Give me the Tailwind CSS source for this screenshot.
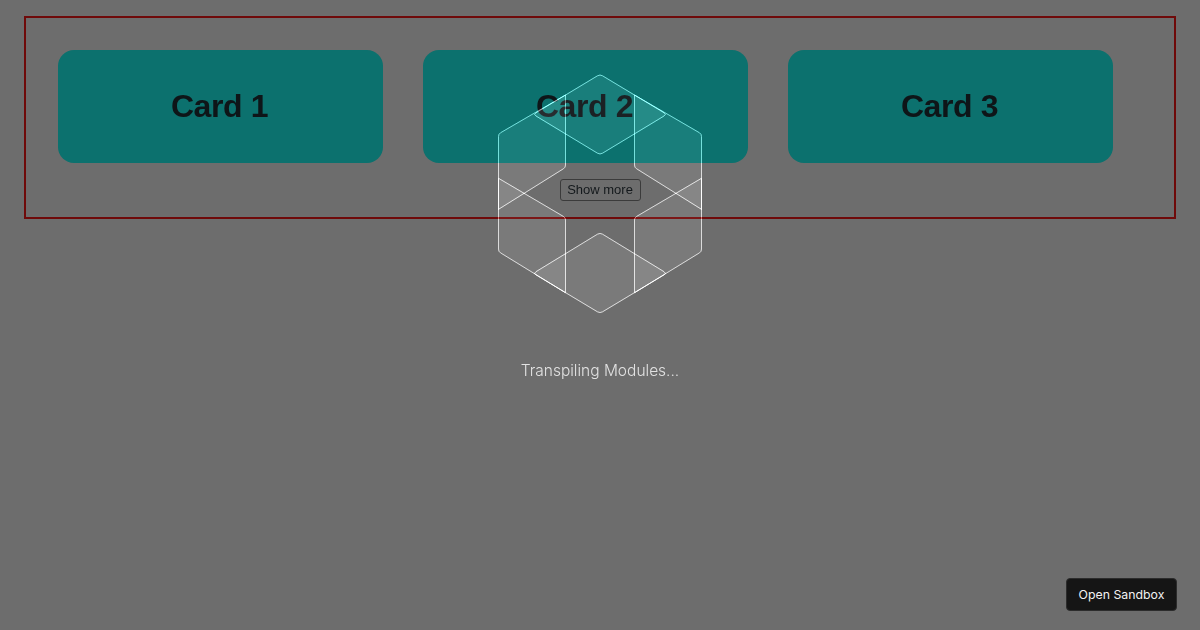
<!DOCTYPE html>
<html lang="en">
<head>
  <meta charset="UTF-8">
  <meta name="viewport" content="width=device-width, initial-scale=1.0">
  <title>Cards</title>
  <script src="https://cdn.jsdelivr.net/npm/@tailwindcss/browser@4"></script>
</head>
<body class="relative w-[1200px] h-[630px] overflow-hidden bg-[#6d6d6d] font-['Liberation_Sans',sans-serif]">
  <!-- Page content -->
  <div class="pt-4 px-6">
    <div class="flex flex-col items-center border-2 border-[#6f0a0a] h-[203px] px-8 pt-8">
      <div class="flex gap-10 w-full">
        <div class="w-[325px] h-[113px] pb-[2px] pr-[2px] flex items-center justify-center rounded-2xl bg-[#0c716e]">
          <h2 class="text-[32px] font-bold tracking-[-0.4px] text-[#0e1518]">Card 1</h2>
        </div>
        <div class="w-[325px] h-[113px] pb-[2px] pr-[2px] flex items-center justify-center rounded-2xl bg-[#0c716e]">
          <h2 class="text-[32px] font-bold tracking-[-0.4px] text-[#0e1518]">Card 2</h2>
        </div>
        <div class="w-[325px] h-[113px] pb-[2px] pr-[2px] flex items-center justify-center rounded-2xl bg-[#0c716e]">
          <h2 class="text-[32px] font-bold tracking-[-0.4px] text-[#0e1518]">Card 3</h2>
        </div>
      </div>
      <button class="mt-4 w-[81px] h-[22px] rounded-[3px] border border-[#3b3b3b] text-[13px] text-[#14191c]">Show more</button>
    </div>
  </div>

  <!-- Loading overlay -->
  <div class="absolute inset-0 flex flex-col items-center pt-[72px]">
    <div class="relative w-[208px] h-[244px]">
      <!-- dodge layers keep the dark text dark, each holds shapes that don't overlap -->
      <svg class="absolute inset-0 mix-blend-color-dodge" width="208" height="244" viewBox="496 72 208 244" fill="#0e0e0e" stroke="#707070">
        <path d="M597.5 75.8Q600 74.3 602.5 75.8L664 112.8Q666.8 114.4 664 116L602.5 153.2Q600 154.7 597.5 153.2L536 116Q533.2 114.4 536 112.8Z" />
        <path d="M597.5 234.2Q600 232.7 602.5 234.2L664 271.7Q666.8 273.3 664 274.9L602.5 311.8Q600 313.3 597.5 311.8L536 274.9Q533.2 273.3 536 271.7Z" />
      </svg>
      <svg class="absolute inset-0 mix-blend-color-dodge" width="208" height="244" viewBox="496 72 208 244" fill="#0e0e0e" stroke="#707070">
        <path d="M565.5 95V165Q565.5 167.5 563.5 168.7L498.5 209.3V136.5Q498.5 134 500.5 132.8Z" />
        <path d="M634.5 95V165Q634.5 167.5 636.5 168.7L701.5 209.3V136.5Q701.5 134 699.5 132.8Z" />
      </svg>
      <svg class="absolute inset-0 mix-blend-color-dodge" width="208" height="244" viewBox="496 72 208 244" fill="#0e0e0e" stroke="#707070">
        <path d="M498.5 178.3L563.5 216.5Q565.5 217.7 565.5 220V292.7L500.5 252.8Q498.5 251.6 498.5 249Z" />
        <path d="M701.5 178.3L636.5 216.5Q634.5 217.7 634.5 220V292.7L699.5 252.8Q701.5 251.6 701.5 249Z" />
      </svg>
      <svg class="absolute inset-0" width="208" height="244" viewBox="496 72 208 244" fill="#ffffff" fill-opacity="0.05" stroke="#ffffff" stroke-opacity="0.4">
        <path d="M597.5 75.8Q600 74.3 602.5 75.8L664 112.8Q666.8 114.4 664 116L602.5 153.2Q600 154.7 597.5 153.2L536 116Q533.2 114.4 536 112.8Z" />
        <path d="M597.5 234.2Q600 232.7 602.5 234.2L664 271.7Q666.8 273.3 664 274.9L602.5 311.8Q600 313.3 597.5 311.8L536 274.9Q533.2 273.3 536 271.7Z" />
        <path d="M565.5 95V165Q565.5 167.5 563.5 168.7L498.5 209.3V136.5Q498.5 134 500.5 132.8Z" />
        <path d="M634.5 95V165Q634.5 167.5 636.5 168.7L701.5 209.3V136.5Q701.5 134 699.5 132.8Z" />
        <path d="M498.5 178.3L563.5 216.5Q565.5 217.7 565.5 220V292.7L500.5 252.8Q498.5 251.6 498.5 249Z" />
        <path d="M701.5 178.3L636.5 216.5Q634.5 217.7 634.5 220V292.7L699.5 252.8Q701.5 251.6 701.5 249Z" />
      </svg>
    </div>
    <p class="mt-[43px] text-[15.5px] leading-6 font-light text-[#e2e2e2] font-['Inter',sans-serif]">Transpiling Modules...</p>
  </div>

  <button class="absolute right-[23px] bottom-[19px] w-[111px] h-[33px] pt-[1px] rounded-[4px] border border-[#2c2c2c] bg-[#151515] text-[12.3px] text-[#f2f2f2] font-['Inter',sans-serif]">Open Sandbox</button>
</body>
</html>
